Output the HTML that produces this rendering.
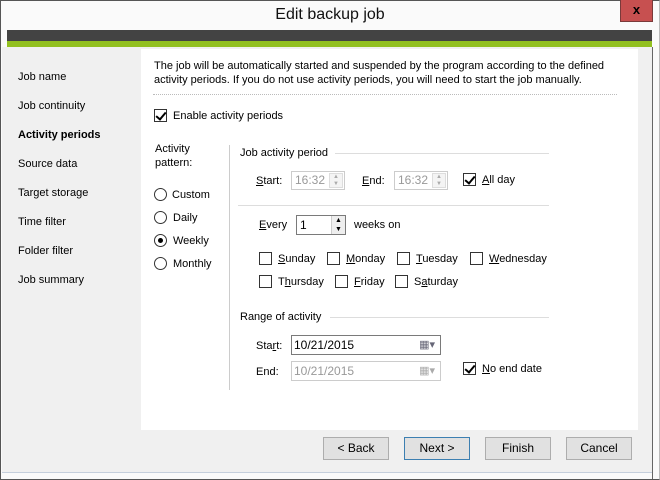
<!DOCTYPE html>
<html><head><style>
*{margin:0;padding:0;box-sizing:border-box}
body{width:660px;height:480px;overflow:hidden;background:#fafafa;font-family:"Liberation Sans",sans-serif;font-size:11px;color:#000;position:relative}
.a{position:absolute}
.t{position:absolute;white-space:nowrap;letter-spacing:0;margin-top:1px}
.cb{position:absolute;width:13px;height:13px;border:1px solid #333;background:#fff}
.cb.k::after{content:"";position:absolute;left:3px;top:0px;width:4px;height:8px;border:solid #000;border-width:0 2px 2px 0;transform:rotate(40deg)}
.rb{position:absolute;width:13px;height:13px;border:1px solid #333;border-radius:50%;background:#fff}
.rb.k::after{content:"";position:absolute;left:3px;top:3px;width:5px;height:5px;border-radius:50%;background:#000}
.btn{position:absolute;top:437px;width:66px;height:23px;background:#e1e1e1;border:1px solid #adadad;text-align:center;line-height:21px;font-size:12px}
.sp{position:absolute;border:1px solid #ccc;background:#fff;color:#999;padding-left:3px;line-height:17px;font-size:12px}
.ar{position:absolute;right:1px;top:1px;width:14px;height:15px;border:1px solid #ddd;background:#f4f4f4;font-size:6px;line-height:7px;text-align:center;color:#aaa}
u{text-decoration:underline}
</style></head><body>
<div class="a" style="left:0;top:0;width:660px;height:480px;border:1px solid #555;border-right-color:#bbb"></div>
<div class="t" style="left:0;width:660px;text-align:center;top:5px;font-size:16px;color:#111">Edit backup job</div>
<div class="a" style="left:620px;top:0;width:33px;height:22px;background:#c75050;border:1px solid #7a3a3a;border-top:none;text-align:center;font-weight:bold;font-size:13px;line-height:20px">x</div>
<div class="a" style="left:7px;top:30px;width:645px;height:11px;background:#434343"></div>
<div class="a" style="left:7px;top:41px;width:645px;height:6px;background:#92c020"></div>
<div class="a" style="left:2px;top:47px;width:651px;height:425px;background:#f0f0f0"></div>
<div class="a" style="left:2px;top:472px;width:651px;height:1px;background:#c5cfdc"></div>
<div class="a" style="left:652px;top:47px;width:1px;height:432px;background:#666"></div>
<div class="a" style="left:141px;top:49px;width:497px;height:381px;background:#fff"></div>
<div class="t" style="left:18px;top:70px">Job name</div>
<div class="t" style="left:18px;top:99px">Job continuity</div>
<div class="t" style="left:18px;top:128px;font-weight:bold">Activity periods</div>
<div class="t" style="left:18px;top:157px">Source data</div>
<div class="t" style="left:18px;top:186px">Target storage</div>
<div class="t" style="left:18px;top:215px">Time filter</div>
<div class="t" style="left:18px;top:244px">Folder filter</div>
<div class="t" style="left:18px;top:273px">Job summary</div>
<div class="t" style="left:154px;top:59px">The job will be automatically started and suspended by the program according to the defined</div>
<div class="t" style="left:154px;top:73px">activity periods. If you do not use activity periods, you will need to start the job manually.</div>
<div class="a" style="left:153px;top:94px;width:464px;border-top:1px dotted #bbb"></div>
<div class="cb k" style="left:154px;top:109px"></div>
<div class="t" style="left:173px;top:109px">Enable activity periods</div>
<div class="t" style="left:155px;top:141px;line-height:14px">Activity<br>pattern:</div>
<div class="a" style="left:229px;top:145px;width:1px;height:245px;background:#ccc"></div>
<div class="rb" style="left:154px;top:188px"></div><div class="t" style="left:172px;top:188px">Custom</div>
<div class="rb" style="left:154px;top:211px"></div><div class="t" style="left:173px;top:211px">Daily</div>
<div class="rb k" style="left:154px;top:234px"></div><div class="t" style="left:173px;top:234px">Weekly</div>
<div class="rb" style="left:154px;top:257px"></div><div class="t" style="left:173px;top:257px">Monthly</div>
<div class="t" style="left:240px;top:146px">Job activity period</div>
<div class="a" style="left:335px;top:153px;width:214px;height:1px;background:#ddd"></div>
<div class="t" style="left:256px;top:174px"><u>S</u>tart:</div>
<div class="sp" style="left:291px;top:171px;width:54px;height:19px">16:32<div class="ar">▲<br>▼</div></div>
<div class="t" style="left:362px;top:174px"><u>E</u>nd:</div>
<div class="sp" style="left:394px;top:171px;width:54px;height:19px">16:32<div class="ar">▲<br>▼</div></div>
<div class="cb k" style="left:463px;top:173px"></div>
<div class="t" style="left:482px;top:173px"><u>A</u>ll day</div>
<div class="a" style="left:238px;top:205px;width:311px;height:1px;background:#ddd"></div>
<div class="t" style="left:259px;top:218px"><u>E</u>very</div>
<div class="a" style="left:296px;top:215px;width:50px;height:20px;border:1px solid #7a7a7a;background:#fff;padding-left:3px;line-height:18px;font-size:12px">1</div>
<div class="a" style="left:331px;top:216px;width:14px;height:18px;background:#eee;border-left:1px solid #ccc;font-size:7px;line-height:9px;text-align:center">▲<br>▼</div>
<div class="t" style="left:354px;top:218px">weeks on</div>
<div class="cb" style="left:259px;top:252px"></div><div class="t" style="left:278px;top:252px"><u>S</u>unday</div>
<div class="cb" style="left:327px;top:252px"></div><div class="t" style="left:346px;top:252px"><u>M</u>onday</div>
<div class="cb" style="left:397px;top:252px"></div><div class="t" style="left:416px;top:252px"><u>T</u>uesday</div>
<div class="cb" style="left:470px;top:252px"></div><div class="t" style="left:489px;top:252px"><u>W</u>ednesday</div>
<div class="cb" style="left:259px;top:275px"></div><div class="t" style="left:278px;top:275px">T<u>h</u>ursday</div>
<div class="cb" style="left:335px;top:275px"></div><div class="t" style="left:354px;top:275px"><u>F</u>riday</div>
<div class="cb" style="left:395px;top:275px"></div><div class="t" style="left:414px;top:275px">S<u>a</u>turday</div>
<div class="t" style="left:240px;top:310px">Range of activity</div>
<div class="a" style="left:330px;top:317px;width:219px;height:1px;background:#ddd"></div>
<div class="t" style="left:256px;top:339px">Sta<u>r</u>t:</div>
<div class="a" style="left:291px;top:335px;width:150px;height:20px;border:1px solid #7a7a7a;background:#fff;padding-left:2px;line-height:18px;font-size:12px">10/21/2015<span style="position:absolute;right:5px;color:#667;font-size:11px">▦▾</span></div>
<div class="t" style="left:256px;top:365px">End:</div>
<div class="a" style="left:291px;top:361px;width:150px;height:20px;border:1px solid #ccc;background:#fff;padding-left:2px;line-height:18px;color:#999;font-size:12px">10/21/2015<span style="position:absolute;right:5px;color:#aaa;font-size:11px">▦▾</span></div>
<div class="cb k" style="left:463px;top:362px"></div>
<div class="t" style="left:482px;top:362px"><u>N</u>o end date</div>
<div class="btn" style="left:323px">&lt; Back</div>
<div class="btn" style="left:404px;border-color:#3c7fb1">Next &gt;</div>
<div class="btn" style="left:485px">Finish</div>
<div class="btn" style="left:566px">Cancel</div>
</body></html>
